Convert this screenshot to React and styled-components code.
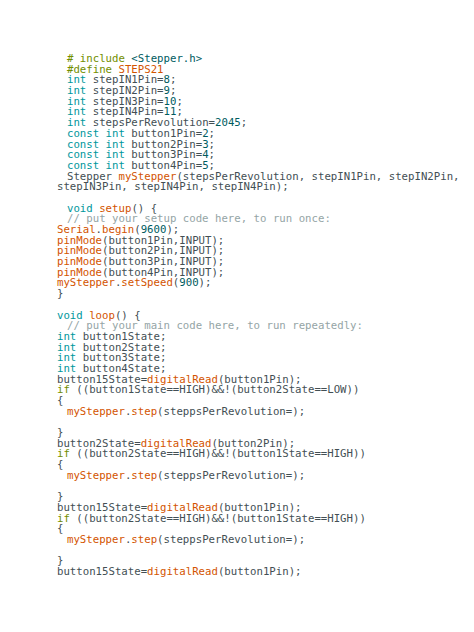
import React from 'react';
import styled, { createGlobalStyle } from 'styled-components';

const GlobalStyle = createGlobalStyle`
  body {
    margin: 0;
    background: #ffffff;
  }
`;

const colors = {
  t: '#434f54',
  k: '#00979c',
  p: '#728e00',
  f: '#d35400',
  n: '#005c5f',
  c: '#95a5a6',
};

// [indent, tokens] — token: [kind, text]
const lines = [
  [1, [['p', '# include '], ['n', '<Stepper.h>']]],
  [1, [['p', '#define '], ['f', 'STEPS21']]],
  [1, [['k', 'int'], ['t', ' stepIN1Pin='], ['n', '8'], ['t', ';']]],
  [1, [['k', 'int'], ['t', ' stepIN2Pin='], ['n', '9'], ['t', ';']]],
  [1, [['k', 'int'], ['t', ' stepIN3Pin='], ['n', '10'], ['t', ';']]],
  [1, [['k', 'int'], ['t', ' stepIN4Pin='], ['n', '11'], ['t', ';']]],
  [1, [['k', 'int'], ['t', ' stepsPerRevolution='], ['n', '2045'], ['t', ';']]],
  [1, [['k', 'const int'], ['t', ' button1Pin='], ['n', '2'], ['t', ';']]],
  [1, [['k', 'const int'], ['t', ' button2Pin='], ['n', '3'], ['t', ';']]],
  [1, [['k', 'const int'], ['t', ' button3Pin='], ['n', '4'], ['t', ';']]],
  [1, [['k', 'const int'], ['t', ' button4Pin='], ['n', '5'], ['t', ';']]],
  [1, [['t', 'Stepper '], ['f', 'myStepper'], ['t', '(stepsPerRevolution, stepIN1Pin, stepIN2Pin,']]],
  [0, [['t', 'stepIN3Pin, stepIN4Pin, stepIN4Pin);']]],
  [0, []],
  [1, [['k', 'void'], ['t', ' '], ['f', 'setup'], ['t', '() {']]],
  [1, [['c', '// put your setup code here, to run once:']]],
  [0, [['f', 'Serial'], ['t', '.'], ['f', 'begin'], ['t', '('], ['n', '9600'], ['t', ');']]],
  [0, [['f', 'pinMode'], ['t', '(button1Pin,INPUT);']]],
  [0, [['f', 'pinMode'], ['t', '(button2Pin,INPUT);']]],
  [0, [['f', 'pinMode'], ['t', '(button3Pin,INPUT);']]],
  [0, [['f', 'pinMode'], ['t', '(button4Pin,INPUT);']]],
  [0, [['f', 'myStepper'], ['t', '.'], ['f', 'setSpeed'], ['t', '('], ['n', '900'], ['t', ');']]],
  [0, [['t', '}']]],
  [0, []],
  [0, [['k', 'void'], ['t', ' '], ['f', 'loop'], ['t', '() {']]],
  [1, [['c', '// put your main code here, to run repeatedly:']]],
  [0, [['k', 'int'], ['t', ' button1State;']]],
  [0, [['k', 'int'], ['t', ' button2State;']]],
  [0, [['k', 'int'], ['t', ' button3State;']]],
  [0, [['k', 'int'], ['t', ' button4State;']]],
  [0, [['t', 'button15State='], ['f', 'digitalRead'], ['t', '(button1Pin);']]],
  [0, [['p', 'if'], ['t', ' ((button1State==HIGH)&&!(button2State==LOW))']]],
  [0, [['t', '{']]],
  [1, [['f', 'myStepper'], ['t', '.'], ['f', 'step'], ['t', '(steppsPerRevolution=);']]],
  [0, []],
  [0, [['t', '}']]],
  [0, [['t', 'button2State='], ['f', 'digitalRead'], ['t', '(button2Pin);']]],
  [0, [['p', 'if'], ['t', ' ((button2State==HIGH)&&!(button1State==HIGH))']]],
  [0, [['t', '{']]],
  [1, [['f', 'myStepper'], ['t', '.'], ['f', 'step'], ['t', '(steppsPerRevolution=);']]],
  [0, []],
  [0, [['t', '}']]],
  [0, [['t', 'button15State='], ['f', 'digitalRead'], ['t', '(button1Pin);']]],
  [0, [['p', 'if'], ['t', ' ((button2State==HIGH)&&!(button1State==HIGH))']]],
  [0, [['t', '{']]],
  [1, [['f', 'myStepper'], ['t', '.'], ['f', 'step'], ['t', '(steppsPerRevolution=);']]],
  [0, []],
  [0, [['t', '}']]],
  [0, [['t', 'button15State='], ['f', 'digitalRead'], ['t', '(button1Pin);']]],
];

export default function App() {
  return (
    <Page>
      <GlobalStyle />
      <Code>
        {lines.map(([indent, tokens], i) => (
          <Line key={i} $indent={indent}>
            {tokens.map(([kind, text], j) => (
              <Token key={j} $kind={kind}>{text}</Token>
            ))}
          </Line>
        ))}
      </Code>
    </Page>
  );
}

const Page = styled.div`
  width: 474px;
  min-height: 632px;
  background: #ffffff;
  padding: 54px 0 0 57px;
  box-sizing: border-box;
`;

const Code = styled.div`
  font-family: "DejaVu Sans Mono", monospace;
  font-size: 10.7px;
  line-height: 10.69px;
  color: ${colors.t};
`;

const Line = styled.div`
  display: flex;
  height: 10.69px;
  overflow: visible;
  white-space: pre;
  padding-left: ${(p) => (p.$indent ? '10px' : '0')};
`;

const Token = styled.span`
  display: inline-block;
  height: 10.69px;
  line-height: 10.69px;
  color: ${(p) => colors[p.$kind]};
`;
